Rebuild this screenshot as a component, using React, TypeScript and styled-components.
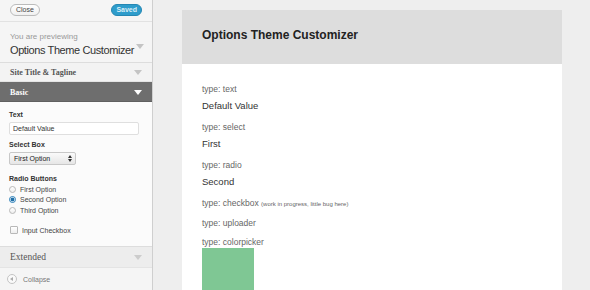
import React from "react";
import styled, { createGlobalStyle } from "styled-components";

const GlobalStyle = createGlobalStyle`
  html, body {
    margin: 0;
    padding: 0;
    height: 290px;
    overflow: hidden;
    background: #eeeeee;
    font-family: "Liberation Sans", Arial, sans-serif;
  }
`;

const Arrow = ({ color = "#bbbbbb" }: { color?: string }) => (
  <svg width="8" height="5" viewBox="0 0 8 5">
    <path d="M0 0 L8 0 L4 5 Z" fill={color} />
  </svg>
);

export default function App() {
  return (
    <>
      <GlobalStyle />
      <SPage>
        <SSidebar>
          <STopBar>
            <SCloseButton type="button">Close</SCloseButton>
            <SSavedButton type="button">Saved</SSavedButton>
          </STopBar>

          <SPreviewInfo>
            <SPreviewText>
              <SPreviewSmall>You are previewing</SPreviewSmall>
              <SPreviewTitle>Options Theme Customizer</SPreviewTitle>
            </SPreviewText>
            <SArrowTop>
              <Arrow color="#c4c4c4" />
            </SArrowTop>
          </SPreviewInfo>

          <SSectionHead>
            <span>Site Title &amp; Tagline</span>
            <Arrow color="#c4c4c4" />
          </SSectionHead>

          <SSectionHead $open>
            <span>Basic</span>
            <Arrow color="#ffffff" />
          </SSectionHead>

          <SSectionBody>
            <SFieldLabel>Text</SFieldLabel>
            <STextInput defaultValue="Default Value" />

            <SFieldLabel>Select Box</SFieldLabel>
            <SSelect>
              <span>First Option</span>
              <SSelectArrows>
                <svg width="4" height="7" viewBox="0 0 4 7">
                  <path d="M0 3 L2 0 L4 3 Z M0 4 L4 4 L2 7 Z" fill="#333" />
                </svg>
              </SSelectArrows>
            </SSelect>

            <SFieldLabel $gap>Radio Buttons</SFieldLabel>
            <SRadioList>
              <SOption>
                <SRadio />
                First Option
              </SOption>
              <SOption>
                <SRadio $checked />
                Second Option
              </SOption>
              <SOption>
                <SRadio />
                Third Option
              </SOption>
            </SRadioList>

            <SCheckRow>
              <SCheckbox />
              Input Checkbox
            </SCheckRow>
          </SSectionBody>

          <SSectionHead $plain>
            <span>Extended</span>
            <Arrow color="#cccccc" />
          </SSectionHead>

          <SCollapse>
            <SCollapseIcon>
              <svg width="4" height="4" viewBox="0 0 4 4">
                <path d="M3 0 L3 4 L0 2 Z" fill="#aaa" />
              </svg>
            </SCollapseIcon>
            Collapse
          </SCollapse>
        </SSidebar>

        <SPreview>
          <SCard>
            <SCardHeader>Options Theme Customizer</SCardHeader>
            <SCardBody>
              <SType>type: text</SType>
              <SValue>Default Value</SValue>
              <SType>type: select</SType>
              <SValue>First</SValue>
              <SType>type: radio</SType>
              <SValue>Second</SValue>
              <SType $spaced>
                type: checkbox <SNote>(work in progress, little bug here)</SNote>
              </SType>
              <SType $spaced>type: uploader</SType>
              <SType $spaced>type: colorpicker</SType>
              <SSwatch $color="#7fc794" />
            </SCardBody>
          </SCard>
        </SPreview>
      </SPage>
    </>
  );
}

const SPage = styled.div`
  display: flex;
  height: 290px;
`;

const SSidebar = styled.div`
  width: 152px;
  flex-shrink: 0;
  background: #f5f5f5;
  border-right: 1px solid #cfcfcf;
  display: flex;
  flex-direction: column;
`;

const STopBar = styled.div`
  height: 22px;
  box-sizing: border-box;
  display: flex;
  justify-content: space-between;
  align-items: center;
  padding: 0 10px 0 10px;
  border-bottom: 1px solid #e2e2e2;
`;

const SCloseButton = styled.button`
  font-family: "Liberation Sans", Arial, sans-serif;
  font-size: 7px;
  color: #444;
  background: linear-gradient(#ffffff, #f0f0f0);
  border: 1px solid #bbbbbb;
  border-radius: 7px;
  height: 12px;
  padding: 0 5px;
  line-height: 10px;
`;

const SSavedButton = styled.button`
  font-family: "Liberation Sans", Arial, sans-serif;
  font-size: 7px;
  font-weight: bold;
  color: #d9eef8;
  background: #2e9ccb;
  border: 1px solid #2587b3;
  border-radius: 7px;
  height: 12px;
  padding: 0 4px;
  line-height: 10px;
`;

const SPreviewInfo = styled.div`
  display: flex;
  justify-content: space-between;
  align-items: flex-start;
  gap: 2px;
  padding: 10px 8px 6px 10px;
  height: 41px;
  box-sizing: border-box;
  border-bottom: 1px solid #dddddd;
`;

const SPreviewText = styled.div`
  flex: 1;
  min-width: 0;
`;

const SArrowTop = styled.div`
  padding-top: 3px;
`;

const SPreviewSmall = styled.div`
  font-size: 8px;
  color: #999;
  line-height: 10px;
`;

const SPreviewTitle = styled.div`
  font-size: 11px;
  letter-spacing: -0.4px;
  color: #333;
  line-height: 16px;
  white-space: nowrap;
`;

const SSectionHead = styled.div<{ $open?: boolean; $plain?: boolean }>`
  height: ${(p) => (p.$plain ? "23px" : "20px")};
  box-sizing: border-box;
  display: flex;
  justify-content: space-between;
  align-items: center;
  padding: 0 10px;
  font-family: "Liberation Serif", "Times New Roman", serif;
  font-size: ${(p) => (p.$plain ? "9.5px" : "8px")};
  font-weight: ${(p) => (p.$plain ? "normal" : "bold")};
  color: ${(p) => (p.$open ? "#ffffff" : "#555555")};
  background: ${(p) => (p.$open ? "#6e6e6e" : p.$plain ? "#ededed" : "#f3f3f3")};
  border-top: 1px solid ${(p) => (p.$plain ? "#dddddd" : "transparent")};
  border-bottom: 1px solid ${(p) => (p.$open ? "#606060" : "#e4e4e4")};
`;

const SSectionBody = styled.div`
  background: #fbfbfb;
  padding: 8px 13px 0 9px;
  height: 146px;
  box-sizing: border-box;
`;

const SFieldLabel = styled.div<{ $gap?: boolean }>`
  font-size: 7px;
  font-weight: bold;
  color: #333;
  margin-top: ${(p) => (p.$gap ? "9px" : "0")};
  margin-bottom: ${(p) => (p.$gap ? "0" : "2px")};
  line-height: 10px;
`;

const STextInput = styled.input`
  display: block;
  width: 130px;
  height: 13px;
  box-sizing: border-box;
  border: 1px solid #dfdfdf;
  border-radius: 2px;
  background: #fff;
  font-family: "Liberation Sans", Arial, sans-serif;
  font-size: 7px;
  color: #333;
  padding: 0 3px;
  margin-bottom: 5px;
  outline: none;
`;

const SSelect = styled.div`
  display: flex;
  justify-content: space-between;
  align-items: center;
  width: 67px;
  height: 13px;
  box-sizing: border-box;
  border: 1px solid #c8c8c8;
  border-radius: 2px;
  background: linear-gradient(#fafafa, #e6e6e6);
  font-size: 7px;
  color: #222;
  padding: 0 3px 0 4px;
`;

const SSelectArrows = styled.span`
  display: flex;
  align-items: center;
`;

const SRadioList = styled.div`
  display: flex;
  flex-direction: column;
  gap: 0.5px;
`;

const SOption = styled.label`
  display: flex;
  align-items: center;
  gap: 4px;
  font-size: 7px;
  color: #444;
  height: 10px;
`;

const SRadio = styled.span<{ $checked?: boolean }>`
  width: 7px;
  height: 7px;
  border-radius: 50%;
  border: 1px solid ${(p) => (p.$checked ? "#2a7fb8" : "#b8b8b8")};
  background: ${(p) =>
    p.$checked
      ? "radial-gradient(circle, #1f6fa8 0 1.6px, #eaf3fa 2.2px)"
      : "linear-gradient(#ffffff, #eeeeee)"};
  box-sizing: border-box;
  display: inline-block;
  flex-shrink: 0;
`;

const SCheckRow = styled.label`
  display: flex;
  align-items: center;
  gap: 4px;
  font-size: 7px;
  color: #444;
  margin-top: 11px;
  margin-left: 1px;
`;

const SCheckbox = styled.span`
  width: 6px;
  height: 6px;
  border: 1px solid #b8b8b8;
  border-radius: 1px;
  background: linear-gradient(#ffffff, #eeeeee);
  display: inline-block;
`;

const SCollapse = styled.div`
  display: flex;
  align-items: center;
  gap: 6px;
  padding: 0 7px;
  height: 22px;
  font-size: 7px;
  color: #777;
`;

const SCollapseIcon = styled.span`
  width: 8px;
  height: 8px;
  border: 1px solid #c4c4c4;
  border-radius: 50%;
  background: #fafafa;
  display: flex;
  align-items: center;
  justify-content: center;
`;

const SPreview = styled.div`
  flex: 1;
  background: #eeeeee;
  padding: 10px 28px 0 29px;
  box-sizing: border-box;
`;

const SCard = styled.div`
  background: #ffffff;
  height: 100%;
`;

const SCardHeader = styled.div`
  background: #dddddd;
  height: 54px;
  box-sizing: border-box;
  padding: 18px 20px 0 20px;
  font-size: 12px;
  font-weight: bold;
  color: #222;
`;

const SCardBody = styled.div`
  padding: 20px 20px 0 20px;
`;

const SType = styled.div<{ $spaced?: boolean }>`
  font-size: 8.5px;
  color: #666;
  line-height: 10px;
  margin-bottom: ${(p) => (p.$spaced ? "9px" : "6px")};
`;

const SNote = styled.span`
  font-size: 6px;
`;

const SValue = styled.div`
  font-size: 9.5px;
  color: #333;
  line-height: 12px;
  margin-bottom: 10px;
`;

const SSwatch = styled.div<{ $color: string }>`
  width: 52px;
  height: 50px;
  margin-top: -8px;
  background: ${(p) => p.$color};
`;
